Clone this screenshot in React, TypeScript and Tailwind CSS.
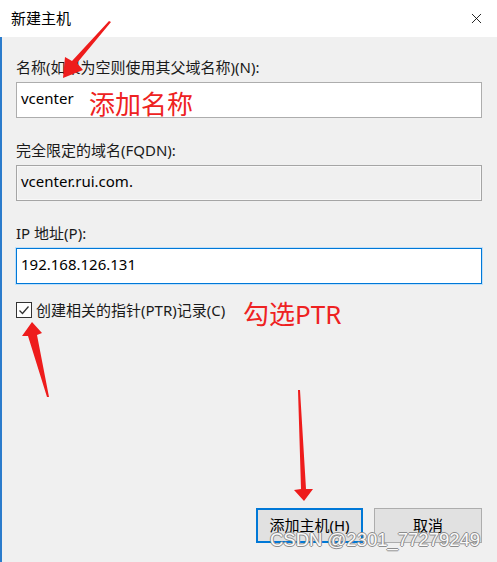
import { X } from 'lucide-react';

const font = "font-['Noto_Sans','Noto_Sans_CJK_SC',sans-serif]";

const Arrows = () => (
  <svg className="pointer-events-none absolute inset-0" width="497" height="562" viewBox="0 0 497 562">
    <polygon points="111,22 77,63 83,70 63,78 65,57 72,61 109,21" fill="#ee1c1c" />
    <polygon points="49,397 37,335 42,333 32,322 22,336 28,336 47,397" fill="#ee1c1c" />
    <polygon points="298,390 301,489 294,490 304,501 313,489 306,489 300,390" fill="#ee1c1c" />
  </svg>
);

const Field = ({ label, value, variant }: { label: string; value: string; variant: 'plain' | 'readonly' | 'focus' }) => {
  const box =
    variant === 'readonly'
      ? 'border border-[#a5a5a5] bg-[#f0f0f0] shadow-[inset_0_0_0_1px_#f8f8f8]'
      : variant === 'focus'
        ? 'border border-[#0078d7] bg-white shadow-[0_0_0_1px_#bfe0fa]'
        : 'border border-[#adadad] bg-white';
  return (
    <div className="flex flex-col">
      <div className="h-[20px] text-[15px] leading-[20px] text-[#1a1a1a]">{label}</div>
      <div className={`mt-[5px] h-[36px] w-[466px] px-[4px] pt-[5px] text-[15px] leading-[20px] text-black ${box}`}>
        {value}
      </div>
    </div>
  );
};

export default function App() {
  return (
    <div className={`relative flex h-[562px] w-[497px] flex-col overflow-hidden bg-[#f0f0f0] ${font}`}>
      <div className="flex h-[37px] shrink-0 items-center justify-between bg-white pl-[11px] pr-[12px]">
        <span className="text-[15px] text-black">新建主机</span>
        <X size={17} strokeWidth={1.2} className="text-black" />
      </div>
      <div className="flex flex-1 flex-col border-l-2 border-[#2b7ccc] pl-[14px] pt-[20px]">
        <div className="flex flex-col gap-[22px]">
          <Field label="名称(如果为空则使用其父域名称)(N):" value="vcenter" variant="plain" />
          <Field label="完全限定的域名(FQDN):" value="vcenter.rui.com." variant="readonly" />
          <Field label="IP 地址(P):" value="192.168.126.131" variant="focus" />
        </div>
        <label className="mt-[17px] flex items-center gap-[4px] text-[15px] leading-[18px] text-[#1a1a1a]">
          <span className="flex h-[16px] w-[16px] items-center justify-center border border-[#333] bg-white">
            <svg width="12" height="12" viewBox="0 0 12 12">
              <path d="M1.5 6.5 L4.5 9.5 L10.5 2.5" fill="none" stroke="#333" strokeWidth="1.3" />
            </svg>
          </span>
          创建相关的指针(PTR)记录(C)
        </label>
        <div className="mt-auto mb-[19px] mr-[15px] flex justify-end gap-[11px]">
          <button className="h-[35px] w-[107px] border-2 border-[#0078d7] bg-[#e1e1e1] text-[15px] text-black">
            添加主机(H)
          </button>
          <button className="h-[35px] w-[108px] border border-[#adadad] bg-[#e1e1e1] text-[15px] text-black">
            取消
          </button>
        </div>
      </div>

      <span className="absolute left-[89px] top-[87px] text-[26px] leading-[34px] text-[#ee2222]">添加名称</span>
      <span className="absolute left-[243px] top-[297px] text-[26px] leading-[34px] text-[#ee2222]">勾选PTR</span>
      <Arrows />
      <span className="absolute left-[270px] top-[529px] font-['Liberation_Sans',sans-serif] text-[18.5px] leading-[22px] text-[#fafafa] [text-shadow:1px_0_0_#8c8c8c,-1px_0_0_#8c8c8c,0_1px_0_#8c8c8c,0_-1px_0_#8c8c8c]">
        CSDN @2301_77279249
      </span>
    </div>
  );
}
